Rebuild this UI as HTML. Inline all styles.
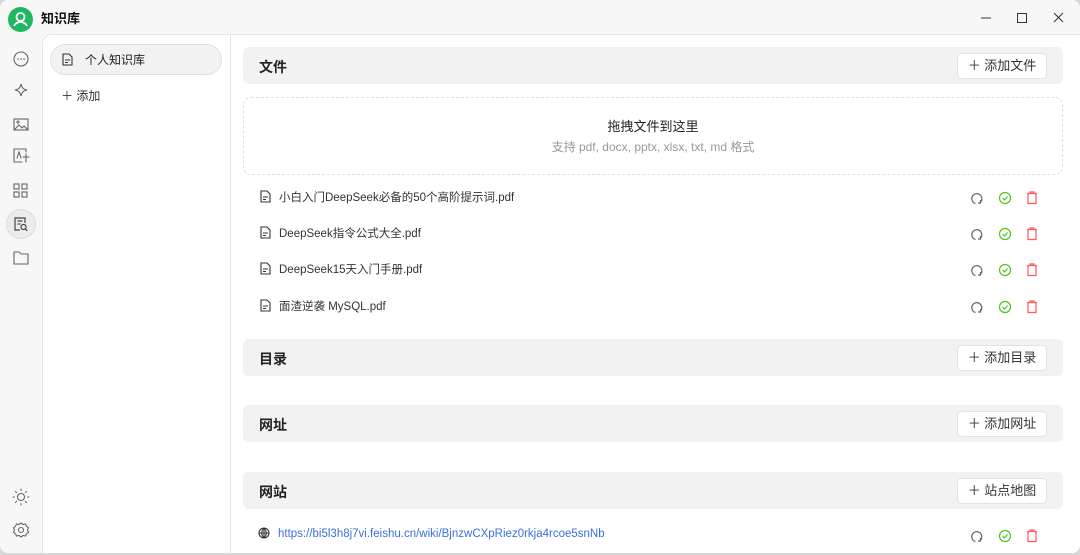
<!DOCTYPE html><html><head><meta charset="utf-8"><style>
*{box-sizing:border-box;margin:0;padding:0}
body{width:1080px;height:555px;background:#d8d8d8;font-family:"Liberation Sans","Noto Sans CJK SC",sans-serif;overflow:hidden;position:relative}
.win{position:absolute;left:0;top:0;width:1080px;height:553px;background:#f7f7f7;border-radius:8px;overflow:hidden}
.abs{position:absolute}
.side{position:absolute;left:42px;top:34px;width:189px;height:530px;background:#fff;border:1px solid #e6e6e6;border-right:1px solid #e3e3e3;border-top-left-radius:10px}
.main{position:absolute;left:231px;top:34px;width:849px;height:530px;background:#fff;border-top:1px solid #e6e6e6}
.hdr{position:absolute;left:12px;width:820px;height:37px;background:#f2f2f2;border-radius:6px}
.hdr b{position:absolute;left:16px;top:10px;font-size:14px;color:#222}
.btn{position:absolute;right:16px;top:6px;height:26px;width:90px;background:#fff;border:1px solid #e2e2e2;border-radius:5px;font-size:13px;color:#333;text-align:center;line-height:24px}
.row{position:absolute;left:29px;font-size:11.5px;color:#333}
.row svg{vertical-align:-2px;margin-right:8px}
.act{position:absolute;left:738px}
</style></head><body><div class="win">
<div class="abs" style="left:8px;top:7px;width:25px;height:25px;border-radius:50%;background:#1fb861">
<svg width="25" height="25" viewBox="0 0 25 25"><circle cx="12.5" cy="10" r="4" fill="none" stroke="#fff" stroke-width="1.8"/><path d="M6 19c1.5-3 4-4 6.5-4s5 1 6.5 4" fill="none" stroke="#fff" stroke-width="1.8"/></svg></div>
<div class="abs" style="left:41px;top:8px;font-size:13px;font-weight:bold;color:#111">知识库</div>
<svg class="abs" style="left:975px;top:10px" width="95" height="16"><path d="M6 8h10" stroke="#333"/><rect x="42.5" y="3.5" width="9" height="9" fill="none" stroke="#333"/><path d="M79 3l9 9M88 3l-9 9" stroke="#333"/></svg>
<svg class="abs" style="left:10px;top:48px" width="22" height="500" fill="none" stroke="#666" stroke-width="1.1" stroke-linecap="round">
<circle cx="11" cy="11" r="7"/><path d="M8 11h.1M11 11h.1M14 11h.1" stroke-width="1.6"/>
<path d="M11 36c1 4 2 5 6 6-4 1-5 2-6 6-1-4-2-5-6-6 4-1 5-2 6-6z"/>
<rect x="4" y="71" width="14" height="11"/><path d="M5 81l4-4 3 3 2-2 4 4"/><circle cx="8" cy="74" r="1"/>
<path d="M16 104v-3H4v13h8"/><path d="M7 110l2-6 2 6M13 109h6M16 106v8"/>
<rect x="4" y="136" width="5" height="5"/><rect x="12" y="136" width="5" height="5"/><rect x="4" y="144" width="5" height="5"/><rect x="12" y="144" width="5" height="5"/>
<path d="M4 204h5l2 2h7v10H4z"/>
<circle cx="11" cy="449" r="3.5"/><path d="M11 441v1.5M11 455.5v1.5M3 449h1.5M17.5 449h1.5M5.5 443.5l1 1M15.5 453.5l1 1M5.5 454.5l1-1M15.5 444.5l1-1"/>
<circle cx="11" cy="482" r="2.5"/><path d="M11 475l2 1.5 2.5-.5 1 2.3 2 1.4-1 2.3 1 2.3-2 1.4-1 2.3-2.5-.5-2 1.5-2-1.5-2.5.5-1-2.3-2-1.4 1-2.3-1-2.3 2-1.4 1-2.3 2.5.5z"/>
</svg>
<div class="abs" style="left:6px;top:209px;width:30px;height:30px;border-radius:50%;background:#ececec;border:1px solid #ddd"></div>
<svg class="abs" style="left:13px;top:216px" width="16" height="16" fill="none" stroke="#444" stroke-width="1.2"><path d="M12 7V2H2v12h5"/><path d="M4.5 5h5M4.5 8h3"/><circle cx="10.5" cy="11" r="2.5"/><path d="M12.3 12.8l2 2"/></svg>
<div class="side">
<div class="abs" style="left:7px;top:9px;width:172px;height:31px;background:#f2f2f2;border:1px solid #e0e0e0;border-radius:16px">
<svg class="abs" style="left:11px;top:8px" width="11" height="13" fill="none" stroke="#333" stroke-width="1.1"><path d="M1 1h6l3 3v8H1z"/><path d="M3 7h5M3 9.5h3"/></svg>
<span class="abs" style="left:34px;top:6px;font-size:12px;color:#222">个人知识库</span></div>
<div class="abs" style="left:18px;top:52px;font-size:12px;color:#333">＋ 添加</div>
</div>
<div class="main">
<div class="hdr" style="top:12px"><b>文件</b><div class="btn">＋ 添加文件</div></div>
<div class="abs" style="left:12px;top:62px;width:820px;height:78px;border:1px dashed #e0e0e0;border-radius:8px;text-align:center">
<div style="margin-top:18px;font-size:13px;color:#222">拖拽文件到这里</div>
<div style="margin-top:3px;font-size:12px;color:#999">支持 pdf, docx, pptx, xlsx, txt, md 格式</div></div>
<div class="row" style="top:154px"><svg width="11" height="13" fill="none" stroke="#333" stroke-width="1.1"><path d="M1 1h6l3 3v8H1z"/><path d="M3 7h5M3 9.5h3"/></svg>小白入门DeepSeek必备的50个高阶提示词.pdf</div>
<div class="row" style="top:190px"><svg width="11" height="13" fill="none" stroke="#333" stroke-width="1.1"><path d="M1 1h6l3 3v8H1z"/><path d="M3 7h5M3 9.5h3"/></svg>DeepSeek指令公式大全.pdf</div>
<div class="row" style="top:226px"><svg width="11" height="13" fill="none" stroke="#333" stroke-width="1.1"><path d="M1 1h6l3 3v8H1z"/><path d="M3 7h5M3 9.5h3"/></svg>DeepSeek15天入门手册.pdf</div>
<div class="row" style="top:263px"><svg width="11" height="13" fill="none" stroke="#333" stroke-width="1.1"><path d="M1 1h6l3 3v8H1z"/><path d="M3 7h5M3 9.5h3"/></svg>面渣逆袭 MySQL.pdf</div>
<svg class="act" style="top:156px" width="80" height="150" fill="none" stroke-width="1.2">
<g id="a"><path d="M6.5 12.5A5 5 0 1 1 11 11.5" stroke="#666"/><path d="M11.5 9v3h-2.5" stroke="#666"/><circle cx="36" cy="7" r="5.5" stroke="#52c41a"/><path d="M33.5 7l2 2 3-3.5" stroke="#52c41a"/><path d="M58 2.5h10M61 2.5V1h4v1.5M59 2.5v10h8v-10" stroke="#ff5a5a"/></g>
<use href="#a" y="36"/><use href="#a" y="72"/><use href="#a" y="109"/></svg>
<div class="hdr" style="top:304px"><b>目录</b><div class="btn">＋ 添加目录</div></div>
<div class="hdr" style="top:370px"><b>网址</b><div class="btn">＋ 添加网址</div></div>
<div class="hdr" style="top:437px"><b>网站</b><div class="btn">＋ 站点地图</div></div>
<div class="row" style="top:492px;color:#3b6fe0;left:27px"><svg width="12" height="12" fill="none" stroke="#333" stroke-width="1.1"><circle cx="6" cy="6" r="5"/><path d="M1 6h10M6 1v10M6 1c-3 3-3 7 0 10M6 1c3 3 3 7 0 10"/></svg>https://bi5l3h8j7vi.feishu.cn/wiki/BjnzwCXpRiez0rkja4rcoe5snNb</div>
<svg class="act" style="top:494px" width="80" height="16" fill="none" stroke-width="1.2"><use href="#a"/></svg>
</div>
</div></body></html>
